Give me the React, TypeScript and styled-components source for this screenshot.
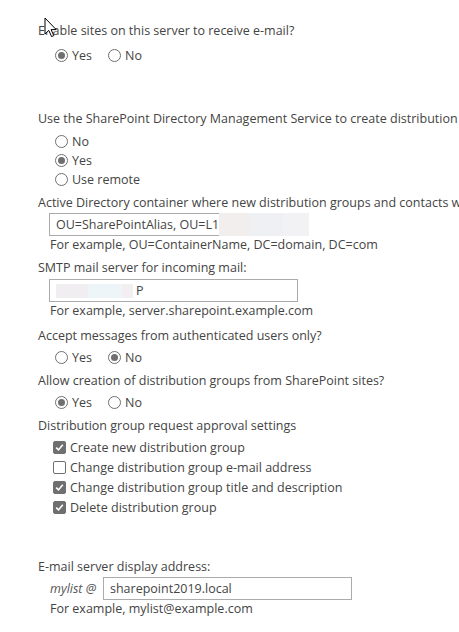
import React from "react";
import styled, { createGlobalStyle } from "styled-components";

const Global = createGlobalStyle`
  html, body { margin: 0; padding: 0; background: #fff; overflow: hidden; }
  body { font-family: "Open Sans", "Noto Sans", sans-serif; font-size: 12.5px; color: #444; }
`;

const Page = styled.div`
  position: relative;
  width: 459px;
  height: 632px;
  overflow: hidden;
  padding: 21px 0 0 38px;
  box-sizing: border-box;
  white-space: nowrap;
`;

const Label = styled.div<{ $mt?: number }>`
  line-height: 19px;
  height: 19px;
  margin-top: ${(p) => p.$mt ?? 0}px;
`;

const Help = styled.div`
  line-height: 17px;
  height: 17px;
  padding-left: 12px;
`;

const RadioRow = styled.div<{ $mt?: number }>`
  display: flex;
  align-items: center;
  height: 19px;
  padding-left: 17px;
  margin-top: ${(p) => p.$mt ?? 0}px;
`;

const RadioCol = styled.div<{ $mt?: number }>`
  display: flex;
  flex-direction: column;
  margin-top: ${(p) => p.$mt ?? 0}px;
`;

const Option = styled.label<{ $w?: number }>`
  display: flex;
  align-items: center;
  height: 19px;
  width: ${(p) => (p.$w ? `${p.$w}px` : "auto")};
  gap: 4px;
`;

const Circle = styled.span<{ $on?: boolean }>`
  width: 11px;
  height: 11px;
  border: 1px solid #6f6f6f;
  border-radius: 50%;
  display: flex;
  align-items: center;
  justify-content: center;
  background: #fff;
  flex: none;
  &::after {
    content: "";
    width: 7px;
    height: 7px;
    border-radius: 50%;
    background: ${(p) => (p.$on ? "#6f6f6f" : "transparent")};
  }
`;

const CheckCol = styled.div<{ $mt?: number }>`
  display: flex;
  flex-direction: column;
  padding-left: 15px;
  margin-top: ${(p) => p.$mt ?? 0}px;
`;

const CheckRow = styled.label`
  display: flex;
  align-items: center;
  height: 20px;
  gap: 4px;
`;

const Box = styled.span<{ $on?: boolean }>`
  width: 11px;
  height: 11px;
  border: 1px solid #6f6f6f;
  border-radius: 2px;
  background: ${(p) => (p.$on ? "#6f6f6f" : "#fff")};
  display: flex;
  align-items: center;
  justify-content: center;
  flex: none;
`;

const InputBox = styled.div<{ $mt?: number; $w?: number }>`
  box-sizing: border-box;
  width: ${(p) => p.$w ?? 249}px;
  height: 23px;
  border: 1px solid #ababab;
  margin-top: ${(p) => p.$mt ?? 0}px;
  margin-left: 11px;
  display: flex;
  align-items: center;
  padding-left: 6px;
  color: #444;
  overflow: visible;
`;

const Redact = styled.span<{ $h: number; $ml?: number }>`
  display: flex;
  flex: none;
  height: ${(p) => p.$h}px;
  margin-left: ${(p) => p.$ml ?? 0}px;
`;

const Blot = styled.span<{ $c: string; $w: number }>`
  display: block;
  width: ${(p) => p.$w}px;
  height: 100%;
  background: ${(p) => p.$c};
`;

const Tail = styled.span`
  margin-left: 3px;
`;

const AddrRow = styled.div<{ $mt?: number }>`
  display: flex;
  align-items: center;
  margin-top: ${(p) => p.$mt ?? 0}px;
  padding-left: 12px;
`;

const Prefix = styled.span`
  font-style: italic;
  color: #555;
  width: 53px;
`;

const AddrInput = styled(InputBox)`
  margin-left: 0;
  width: 249px;
`;

const Cursor = styled.svg`
  position: absolute;
  left: 44px;
  top: 17px;
`;

const Check = () => (
  <svg width="9" height="9" viewBox="0 0 9 9">
    <path d="M1.2 4.6 L3.5 6.9 L7.8 1.8" fill="none" stroke="#fff" strokeWidth="1.6" />
  </svg>
);

const Radio = ({ on, label, w }: { on?: boolean; label: string; w?: number }) => (
  <Option $w={w}>
    <Circle $on={on} />
    <span>{label}</span>
  </Option>
);

const CB = ({ on, label }: { on?: boolean; label: string }) => (
  <CheckRow>
    <Box $on={on}>{on && <Check />}</Box>
    <span>{label}</span>
  </CheckRow>
);

export default function App() {
  return (
    <>
      <Global />
      <Page>
        <Label>Enable sites on this server to receive e-mail?</Label>
        <RadioRow $mt={6}>
          <Radio on label="Yes" w={53} />
          <Radio label="No" />
        </RadioRow>

        <Label $mt={44}>Use the SharePoint Directory Management Service to create distribution groups and contacts?</Label>
        <RadioCol $mt={4}>
          <RadioRow><Radio label="No" /></RadioRow>
          <RadioRow><Radio on label="Yes" /></RadioRow>
          <RadioRow><Radio label="Use remote" /></RadioRow>
        </RadioCol>

        <Label $mt={4}>Active Directory container where new distribution groups and contacts will be created:</Label>
        <InputBox $mt={1}>
          <span>OU=SharePointAlias, OU=L1</span>
          <Redact $h={23}>
            <Blot $c="#f2eeee" $w={31} />
            <Blot $c="#eff0f4" $w={33} />
            <Blot $c="#f2f2f4" $w={26} />
          </Redact>
        </InputBox>
        <Help>For example, OU=ContainerName, DC=domain, DC=com</Help>

        <Label $mt={5}>SMTP mail server for incoming mail:</Label>
        <InputBox $mt={2}>
          <Redact $h={14}>
            <Blot $c="#f1eef1" $w={32} />
            <Blot $c="#edf5f8" $w={34} />
            <Blot $c="#f3eef0" $w={11} />
          </Redact>
          <Tail>P</Tail>
        </InputBox>
        <Help>For example, server.sharepoint.example.com</Help>

        <Label $mt={7}>Accept messages from authenticated users only?</Label>
        <RadioRow $mt={3}>
          <Radio label="Yes" w={53} />
          <Radio on label="No" />
        </RadioRow>

        <Label $mt={4}>Allow creation of distribution groups from SharePoint sites?</Label>
        <RadioRow $mt={3}>
          <Radio on label="Yes" w={53} />
          <Radio label="No" />
        </RadioRow>

        <Label $mt={4}>Distribution group request approval settings</Label>
        <CheckCol $mt={2}>
          <CB on label="Create new distribution group" />
          <CB label="Change distribution group e-mail address" />
          <CB on label="Change distribution group title and description" />
          <CB on label="Delete distribution group" />
        </CheckCol>

        <Label $mt={40}>E-mail server display address:</Label>
        <AddrRow $mt={1}>
          <Prefix>mylist @</Prefix>
          <AddrInput>sharepoint2019.local</AddrInput>
        </AddrRow>
        <Help>For example, mylist@example.com</Help>

        <Cursor width="14" height="21" viewBox="0 0 14 21">
          <path d="M1 1 L1 17 L4.8 13.4 L7.6 19.6 L9.8 18.6 L7.1 12.6 L12.2 12.6 Z" fill="#fff" stroke="#000" strokeWidth="1" strokeLinejoin="miter" />
        </Cursor>
      </Page>
    </>
  );
}
